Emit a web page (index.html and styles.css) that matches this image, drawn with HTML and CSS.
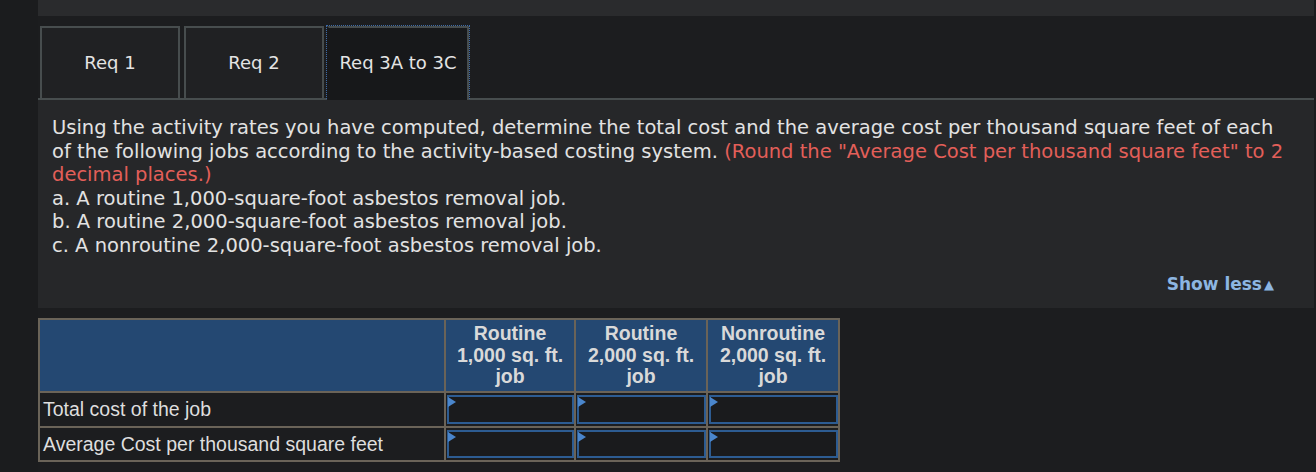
FILE: index.html
```html
<!DOCTYPE html>
<html>
<head>
<meta charset="utf-8">
<link rel="stylesheet" href="styles.css">
</head>
<body>
<div class="page">
  <div class="side"></div>
  <div class="main">
    <div class="topband"></div>
    <div class="tabbar">
      <div class="tab">Req 1</div>
      <div class="tab">Req 2</div>
      <div class="tab active">Req 3A to 3C</div>
    </div>
    <div class="panel">
      <p class="question">Using the activity rates you have computed, determine the total cost and the average cost per thousand square feet of each of the following jobs according to the activity-based costing system. <span class="hint">(Round the "Average Cost per thousand square feet" to 2 decimal places.)</span><br>a. A routine 1,000-square-foot asbestos removal job.<br>b. A routine 2,000-square-foot asbestos removal job.<br>c. A nonroutine 2,000-square-foot asbestos removal job.</p>
      <div class="showrow"><span class="showless">Show less<span class="tri">&#9650;</span></span></div>
    </div>
    <div class="answer">
      <table class="grid">
        <colgroup>
          <col class="w1">
          <col class="w2">
          <col class="w3">
          <col class="w3">
        </colgroup>
        <tr class="head">
          <th></th>
          <th>Routine<br>1,000 sq. ft.<br>job</th>
          <th>Routine<br>2,000 sq. ft.<br>job</th>
          <th>Nonroutine<br>2,000 sq. ft.<br>job</th>
        </tr>
        <tr class="row1">
          <td class="label">Total cost of the job</td>
          <td class="cell"><div class="inp"><span class="flag"></span></div></td>
          <td class="cell"><div class="inp"><span class="flag"></span></div></td>
          <td class="cell"><div class="inp"><span class="flag"></span></div></td>
        </tr>
        <tr class="row2">
          <td class="label">Average Cost per thousand square feet</td>
          <td class="cell"><div class="inp"><span class="flag"></span></div></td>
          <td class="cell"><div class="inp"><span class="flag"></span></div></td>
          <td class="cell"><div class="inp"><span class="flag"></span></div></td>
        </tr>
      </table>
    </div>
  </div>
</div>
</body>
</html>
```
FILE: styles.css
```css
html, body {
  margin: 0;
  padding: 0;
  background: #1b1c1e;
  height: 472px;
  overflow: hidden;
}
.page {
  display: flex;
  height: 472px;
}
.side {
  width: 38px;
  flex: none;
  background: #1b1c1e;
}
.main {
  flex: 1;
  margin-right: 2px;
  background: #1c1d1f;
  display: flex;
  flex-direction: column;
}
.topband {
  height: 16px;
  background: #2a2b2d;
}
.tabbar {
  display: flex;
  gap: 4px;
  padding: 10px 0 0 2px;
  border-bottom: 2px solid #474d4e;
  height: 72px;
}
.tab {
  width: 140px;
  box-sizing: border-box;
  height: 72px;
  border: 2px solid #474d4e;
  border-bottom: none;
  background: #202123;
  color: #e4e4e4;
  font-family: "DejaVu Sans", Verdana, sans-serif;
  font-size: 18px;
  display: flex;
  align-items: center;
  justify-content: center;
  padding-bottom: 2px;
}
.tab.active {
  width: 142px;
  margin-left: -1px;
  height: 74px;
  margin-bottom: -2px;
  padding-bottom: 4px;
  background: #17181a;
  border-left-color: #17181a;
  outline: 1px dotted #3d6aa6;
  outline-offset: 0;
}
.panel {
  background: #262729;
  padding: 16px 16px 0 14px;
  height: 192px;
  font-family: "DejaVu Sans", Verdana, sans-serif;
}
.question {
  margin: 0;
  font-size: 19.5px;
  line-height: 23.5px;
  color: #e2e2e2;
}
.hint {
  color: #e35f59;
}
.showrow {
  display: flex;
  justify-content: flex-end;
  margin-top: 17px;
  padding-right: 24px;
}
.showless {
  color: #8db6e2;
  font-weight: bold;
  font-size: 17px;
  display: flex;
  align-items: center;
}
.tri {
  font-size: 13px;
  margin-left: 2px;
}
.answer {
  padding-top: 10px;
}
.grid {
  border-collapse: collapse;
  table-layout: fixed;
  width: 800px;
  border: 2px solid #6a6358;
  font-family: "Liberation Sans", Arial, sans-serif;
  color: #dedede;
}
.w1 {
  width: 406px;
}
.w2 {
  width: 130px;
}
.w3 {
  width: 132px;
}
.grid th, .grid td {
  border: 2px solid #6a6358;
  padding: 0;
}
.head th {
  background: #244872;
  font-size: 19.5px;
  font-weight: bold;
  line-height: 21.5px;
  height: 71px;
  color: #d9d9d9;
  vertical-align: middle;
}
.label {
  font-size: 19.5px;
  padding: 0 3px !important;
  background: #1c1d1f;
  text-align: left;
  white-space: nowrap;
}
.row1 td {
  height: 31px;
}
.row2 td {
  height: 30px;
}
.cell {
  background: #1c1d1f;
  padding: 1px 0 1px 1px !important;
}
.inp {
  position: relative;
  box-sizing: border-box;
  height: 29px;
  border: 2px solid #2d5c92;
  background: #1a1b1d;
}
.row2 .inp {
  height: 28px;
}
.flag {
  position: absolute;
  left: -1px;
  top: 0;
  width: 0;
  height: 0;
  border-top: 5px solid transparent;
  border-bottom: 5px solid transparent;
  border-left: 8px solid #4a86cc;
}
```
